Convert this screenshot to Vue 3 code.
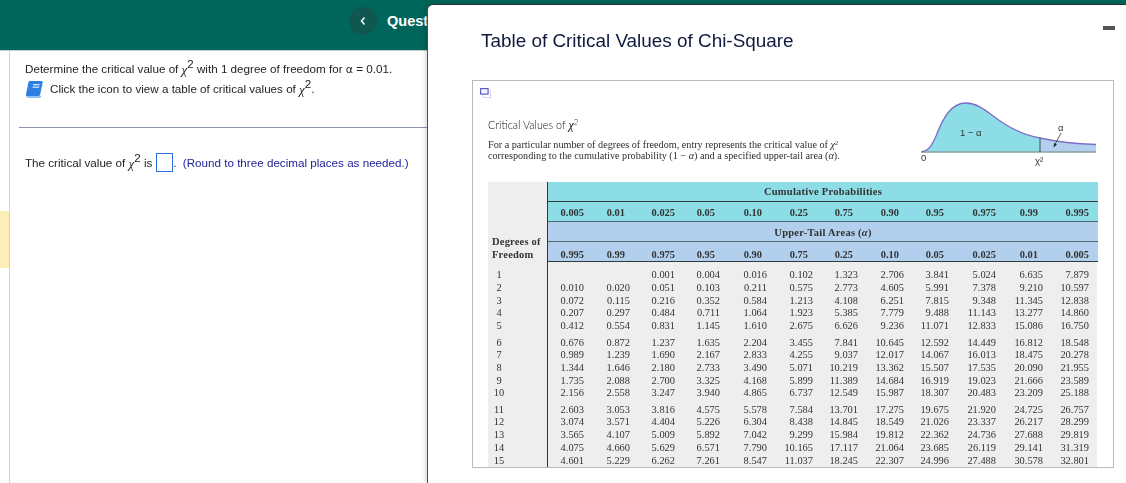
<script setup>
const topLabels = ['0.005','0.01','0.025','0.05','0.10','0.25','0.75','0.90','0.95','0.975','0.99','0.995']
const tailLabels = ['0.995','0.99','0.975','0.95','0.90','0.75','0.25','0.10','0.05','0.025','0.01','0.005']
const groups = [
  [
    ['1','','','0.001','0.004','0.016','0.102','1.323','2.706','3.841','5.024','6.635','7.879'],
    ['2','0.010','0.020','0.051','0.103','0.211','0.575','2.773','4.605','5.991','7.378','9.210','10.597'],
    ['3','0.072','0.115','0.216','0.352','0.584','1.213','4.108','6.251','7.815','9.348','11.345','12.838'],
    ['4','0.207','0.297','0.484','0.711','1.064','1.923','5.385','7.779','9.488','11.143','13.277','14.860'],
    ['5','0.412','0.554','0.831','1.145','1.610','2.675','6.626','9.236','11.071','12.833','15.086','16.750'],
  ],
  [
    ['6','0.676','0.872','1.237','1.635','2.204','3.455','7.841','10.645','12.592','14.449','16.812','18.548'],
    ['7','0.989','1.239','1.690','2.167','2.833','4.255','9.037','12.017','14.067','16.013','18.475','20.278'],
    ['8','1.344','1.646','2.180','2.733','3.490','5.071','10.219','13.362','15.507','17.535','20.090','21.955'],
    ['9','1.735','2.088','2.700','3.325','4.168','5.899','11.389','14.684','16.919','19.023','21.666','23.589'],
    ['10','2.156','2.558','3.247','3.940','4.865','6.737','12.549','15.987','18.307','20.483','23.209','25.188'],
  ],
  [
    ['11','2.603','3.053','3.816','4.575','5.578','7.584','13.701','17.275','19.675','21.920','24.725','26.757'],
    ['12','3.074','3.571','4.404','5.226','6.304','8.438','14.845','18.549','21.026','23.337','26.217','28.299'],
    ['13','3.565','4.107','5.009','5.892','7.042','9.299','15.984','19.812','22.362','24.736','27.688','29.819'],
    ['14','4.075','4.660','5.629','6.571','7.790','10.165','17.117','21.064','23.685','26.119','29.141','31.319'],
    ['15','4.601','5.229','6.262','7.261','8.547','11.037','18.245','22.307','24.996','27.488','30.578','32.801'],
  ],
]
</script>

<template>
  <div class="page">
    <header class="topbar">
      <span class="back">
        <svg width="8" height="10" viewBox="0 0 8 10"><path d="M5.500 1.500 2.500 5l3 3.500" fill="none" stroke="#fff" stroke-width="1.500"/></svg>
      </span>
      <span class="quest">Question</span>
    </header>

    <div class="content">
      <aside class="strip"><div class="strip-mark"></div></aside>
      <main class="question">
        <div class="q-top">
          <p class="line">Determine the critical value of <span class="chi">χ</span><sup>2</sup> with 1 degree of freedom for <span class="alpha">α</span> = 0.01.</p>
          <p class="line with-icon">
            <svg class="book" width="19" height="19" viewBox="0 0 19 19">
              <path d="M5 1h11.500c.9 0 1.400.7 1.200 1.500l-2.600 12.200c-.2.8-.9 1.300-1.700 1.300H2.300c-.9 0-1.500-.7-1.300-1.600L3.400 2.400C3.600 1.600 4.200 1 5 1Z" fill="#2e7fe2"/>
              <path d="M1.200 15.200c0 1.600 1 2.600 2.400 2.600h10.600c.9 0 1.500-.5 1.800-1.300l.3-1.400c-.2.7-.8 1.200-1.600 1.200H3.700c-1 0-1.900-.1-2.500-1.100Z" fill="#6fb0f2"/>
              <path d="M8 4.600h6.600M7.600 7.200h6.600" stroke="#dcecff" stroke-width="1.200"/>
            </svg>
            <span>Click the icon to view a table of critical values of <span class="chi">χ</span><sup>2</sup>.</span>
          </p>
        </div>
        <hr class="divider" />
        <p class="line answer">
          The critical value of <span class="chi">χ</span><sup>2</sup> is<span class="box"></span>. <span class="hint">(Round to three decimal places as needed.)</span>
        </p>
      </main>
    </div>

    <section class="modal">
      <span class="minimize"></span>
      <h1 class="title">Table of Critical Values of Chi-Square</h1>
      <div class="frame">
        <svg class="copy" width="11" height="10" viewBox="0 0 11 10">
          <rect x="3" y="3" width="7.500" height="6.500" fill="none" stroke="#d3d6ee" stroke-width="1"/>
          <rect x="0.600" y="0.600" width="7.500" height="5.500" fill="#f2f2ff" stroke="#5654bd" stroke-width="1.100"/>
        </svg>
        <div class="intro">
          <div class="intro-text">
            <h2 class="intro-title">Critical Values of <span class="chi-s">χ</span><sup>2</sup></h2>
            <p class="intro-desc">For a particular number of degrees of freedom, entry represents the critical value of <i>χ</i><sup>2</sup><br />corresponding to the cumulative probability (1 − <i>α</i>) and a specified upper-tail area (<i>α</i>).</p>
          </div>
          <svg class="curve" width="176" height="68" viewBox="0 0 176 68">
            <path d="M1 52.500C8 52 11 46 15 37 22 19 30 4 45 4c13 0 22 10 37 20 14 9 24 13 37 15v13.500Z" fill="#8cdde6"/>
            <path d="M119 39c18 4 36 6 56 6.500v7H119Z" fill="#b2d0ee"/>
            <path d="M1 52.500C8 52 11 46 15 37 22 19 30 4 45 4c13 0 22 10 37 20 14 9 24 13 37 15 18 4 36 6 56 6.500" fill="none" stroke="#7a6fc9" stroke-width="1.300"/>
            <path d="M0 53h175" stroke="#4f6f74" stroke-width="1"/>
            <path d="M119 39v14" stroke="#4f6f74" stroke-width="1.300"/>
            <path d="M140 34l-6 11.500" stroke="#333" stroke-width=".8"/>
            <path d="M132.500 48.500l.7-4.500 2.700 1.400Z" fill="#222"/>
            <text x="39" y="37" class="c-txt">1 − α</text>
            <text x="137" y="32" class="c-txt">α</text>
            <text x="0" y="62" class="c-txt">0</text>
            <text x="114" y="65" class="c-txt">χ²</text>
          </svg>
        </div>

        <div class="table">
          <div class="t-head">
            <div class="stub head-stub"><span>Degrees of</span><span>Freedom</span></div>
            <div class="t-head-main">
              <div class="band teal dark-b">Cumulative Probabilities</div>
              <div class="cols teal soft-b tall">
                <span v-for="l in topLabels" :key="l" class="cell bold" :class="{ short: l.length < 5 }">{{ l }}</span>
              </div>
              <div class="band blue soft-b">Upper-Tail Areas (<i>α</i>)</div>
              <div class="cols blue dark-b tall low">
                <span v-for="l in tailLabels" :key="l" class="cell bold" :class="{ short: l.length < 5 }">{{ l }}</span>
              </div>
            </div>
          </div>
          <div class="t-body">
            <div v-for="(g, i) in groups" :key="i" class="group">
              <div v-for="r in g" :key="r[0]" class="row">
                <span class="stub num">{{ r[0] }}</span>
                <div class="cols">
                  <span v-for="(v, j) in r.slice(1)" :key="j" class="cell">{{ v }}</span>
                </div>
              </div>
            </div>
          </div>
        </div>
      </div>
    </section>
  </div>
</template>

<style>
html, body { margin: 0; background: #fff; }
</style>

<style scoped>
.page {
  position: relative;
  width: 1126px;
  height: 483px;
  overflow: hidden;
  background: #fff;
  font-family: "Liberation Sans", Arial, sans-serif;
  color: #222;
}
.topbar {
  height: 50px;
  background: #00655a;
  border-bottom: 1px solid #bcd0cc;
  display: flex;
  align-items: center;
  gap: 10px;
  padding-left: 349px;
}
.back {
  width: 28px;
  height: 28px;
  margin-top: -8px;
  border-radius: 50%;
  background: #0f5750;
  display: flex;
  align-items: center;
  justify-content: center;
}
.quest {
  margin-top: -8px;
  color: #fff;
  font-weight: 700;
  font-size: 14.500px;
  white-space: nowrap;
}
.content { display: flex; height: 432px; }
.strip {
  width: 9px;
  flex: none;
  border-right: 1px solid #cdd2dc;
  padding-top: 160px;
}
.strip-mark { height: 57px; background: #fdeeb8; }
.question { flex: 1; padding-left: 15px; min-width: 0; filter: blur(.25px); }
.q-top { padding-top: 8px; }
.line {
  margin: 0;
  font-size: 11.650px;
  line-height: 20px;
  height: 20px;
  white-space: nowrap;
  color: #222;
}
.line sup { font-size: 11.500px; line-height: 0; vertical-align: 5px; }
.chi {
  font-family: "Liberation Serif", serif;
  font-style: italic;
  font-size: 13px;
  line-height: 0;
  vertical-align: -1px;
}
.alpha { font-family: "DejaVu Sans", sans-serif; font-size: 11px; }
.with-icon { display: flex; align-items: center; gap: 6px; }
.book { flex: none; }
.divider {
  margin: 28px 0 0 -6px;
  border: 0;
  border-top: 1px solid #8a93ac;
  height: 0;
}
.answer { margin-top: 25px; }
.box {
  display: inline-block;
  width: 15px;
  height: 17px;
  border: 1px solid #2a6fdb;
  vertical-align: -5px;
  margin: 0 0 0 4px;
}
.hint { color: #22229a; margin-left: 3px; }

.modal {
  position: absolute;
  top: 4px;
  left: 427px;
  right: 0;
  bottom: 0;
  background: #fff;
  border-top: 1px solid #27302f;
  border-left: 1px solid #4a4d52;
  border-top-left-radius: 6px;
  box-shadow: -2px 0 4px rgba(0, 0, 0, .15);
  overflow: hidden;
}
.minimize {
  position: absolute;
  top: 21px;
  right: 11px;
  width: 12px;
  height: 4px;
  background: #555;
}
.title {
  margin: 0;
  padding: 24px 0 0 53px;
  height: 52px;
  box-sizing: border-box;
  font-size: 18.900px;
  line-height: 24px;
  font-weight: 400;
  color: #101a3c;
  filter: blur(.2px);
}
.frame {
  margin: 23px 12px 0 44px;
  border: 1px solid #bbb;
  padding: 0 16px 0 15px;
  font-family: "Liberation Serif", serif;
  filter: blur(.4px);
}
.copy { display: block; margin: 7px 0 0 -8px; }
.intro {
  display: flex;
  justify-content: space-between;
  align-items: flex-start;
  height: 66px;
  margin: 0 0 18px;
}
.intro-text { padding-top: 20px; }
.intro-title {
  margin: 0;
  font-family: Lato, sans-serif;
  font-weight: 300;
  font-size: 10.800px;
  line-height: 14px;
  color: #111;
}
.chi-s { font-family: "Liberation Serif", serif; font-style: italic; font-size: 12px; }
.intro-title sup { font-size: 8px; line-height: 0; vertical-align: 4px; }
.intro-desc {
  margin: 7px 0 0;
  font-size: 10.200px;
  line-height: 11px;
  color: #2e2e2e;
  white-space: nowrap;
}
.intro-desc sup { font-size: 6px; line-height: 0; vertical-align: 3px; }
.curve { flex: none; display: block; overflow: visible; margin-top: 1px; }
.c-txt { font-family: "Liberation Sans", sans-serif; font-size: 9.500px; fill: #333; }

.table { font-size: 10.400px; color: #333; }
.t-head { display: flex; }
.stub {
  width: 60px;
  flex: none;
  box-sizing: border-box;
  background: #eee;
  border-right: 1px solid #2f3a3e;
}
.head-stub {
  display: flex;
  flex-direction: column;
  justify-content: flex-end;
  padding: 0 0 .4px 4px;
  font-weight: 700;
  font-size: 10.500px;
  line-height: 13px;
  letter-spacing: .2px;
  color: #333;
}
.t-head-main { flex: 1; }
.band {
  height: 18.900px;
  line-height: 20px;
  text-align: center;
  font-weight: 700;
  font-size: 10.500px;
  letter-spacing: .25px;
  color: #333;
}
.band.blue { line-height: 21.400px; }
.teal { background: #8cdde6; }
.blue { background: #b2d0ee; }
.dark-b { border-bottom: 1px solid #2f3a3e; }
.soft-b { border-bottom: 1px solid #50686e; }
.cols {
  display: grid;
  grid-template-columns: 45px 46px 45px 45px 47px 46px 45px 46px 45px 47px 47px 46px;
  flex: 1;
}
.tall { height: 18.900px; line-height: 21.600px; align-items: start; }
.low { line-height: 25px; }
.cell { text-align: right; padding-right: 9px; white-space: nowrap; }
.cell.short { padding-right: 14px; }
.bold { font-weight: 700; color: #333; }
.t-body { position: relative; background: #eee; }
.group { margin-top: 3.800px; }
.group:first-child { margin-top: 0; padding-top: 7.750px; }
.row { display: flex; height: 12.700px; line-height: 12.700px; }
.num { text-align: center; padding-right: 37px; }
.t-body::before {
  content: "";
  position: absolute;
  left: 59px;
  top: 0;
  bottom: 0;
  width: 1px;
  background: #2f3a3e;
}
</style>
